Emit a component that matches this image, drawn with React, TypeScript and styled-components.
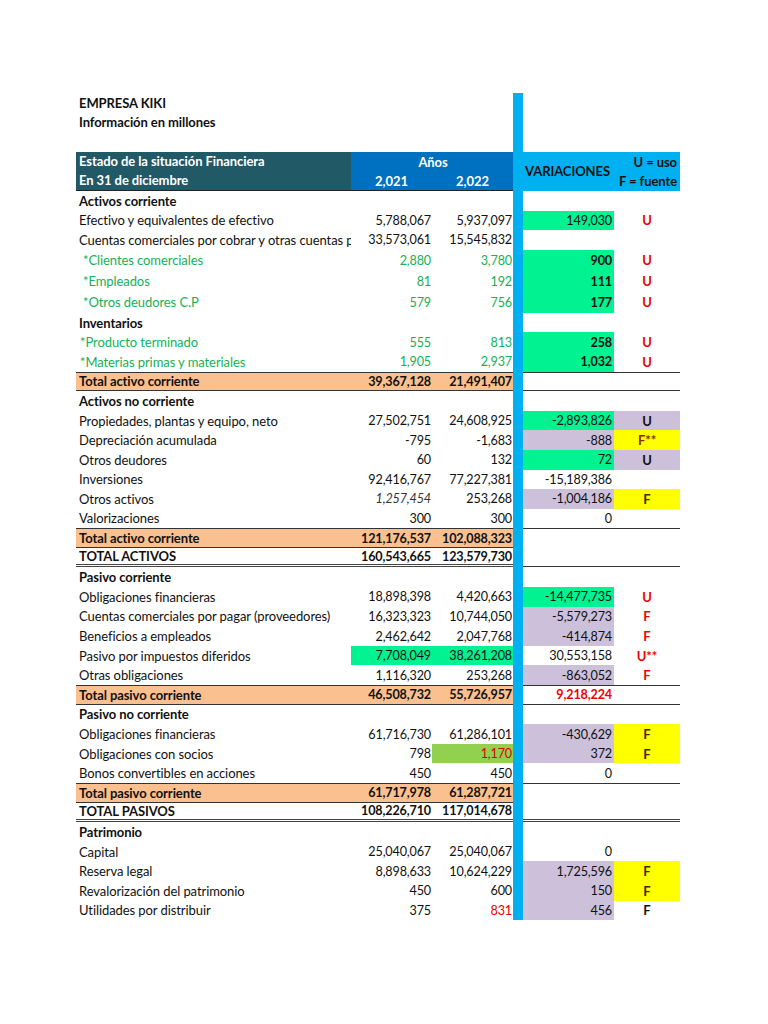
import React from "react";
import styled, { createGlobalStyle, css } from "styled-components";

const GlobalStyle = createGlobalStyle`
  html, body { margin: 0; padding: 0; background: #ffffff; }
  body { font-family: Lato, "Liberation Sans", sans-serif; color: #111; }
`;

const COLS = "275px 81px 81px 10px 91px 66px";
const RH = 19.6;

const C = {
  teal: "#215967",
  blue: "#0070C0",
  sky: "#00B0F0",
  mint: "#00F291",
  lav: "#CCC0DA",
  yellow: "#FFFF00",
  orange: "#FAC090",
  lime: "#92D050",
  green: "#16B055",
  red: "#F00000",
  darkF: "#3C2A00",
};

type Line = "line" | "double" | undefined;

const lines = css<{ $top?: Line; $bottom?: Line }>`
  box-sizing: border-box;
  border-top: ${(p) =>
    p.$top === "double" ? "3px double #444" : p.$top === "line" ? "1px solid #333" : "none"};
  border-bottom: ${(p) =>
    p.$bottom === "double" ? "3px double #444" : p.$bottom === "line" ? "1px solid #333" : "none"};
`;

const Page = styled.div`
  padding: 93px 0 80px 76px;
  font-size: 13px;
  letter-spacing: -0.08px;
`;

const Row = styled.div<{ $h: number }>`
  display: grid;
  grid-template-columns: ${COLS};
  height: ${(p) => p.$h}px;
`;

const TitleText = styled.div`
  display: flex;
  align-items: center;
  padding-left: 3px;
  font-weight: 700;
  white-space: nowrap;
  grid-column: 1 / 4;
`;

const Bar = styled.div`
  grid-column: 4;
  background: ${C.sky};
`;

const LabelCell = styled.div<{
  $top?: Line;
  $bottom?: Line;
  $fill?: string;
  $color?: string;
  $bold?: boolean;
  $indent: number;
}>`
  ${lines};
  display: flex;
  align-items: center;
  padding-left: ${(p) => p.$indent}px;
  background: ${(p) => p.$fill || "transparent"};
  color: ${(p) => p.$color || "#111"};
  font-weight: ${(p) => (p.$bold ? 700 : 400)};
  white-space: nowrap;
  overflow: hidden;
`;

const NumCell = styled.div<{
  $top?: Line;
  $bottom?: Line;
  $fill?: string;
  $color?: string;
  $bold?: boolean;
  $italic?: boolean;
}>`
  ${lines};
  display: flex;
  align-items: center;
  justify-content: flex-end;
  padding-right: 1px;
  font-size: 12.6px;
  letter-spacing: -0.15px;
  background: ${(p) => p.$fill || "transparent"};
  color: ${(p) => p.$color || "#111"};
  font-weight: ${(p) => (p.$bold ? 700 : 400)};
  font-style: ${(p) => (p.$italic ? "italic" : "normal")};
  white-space: nowrap;
`;

const VarCell = styled(NumCell)`
  padding-right: 2px;
`;

const CodeCell = styled.div<{
  $top?: Line;
  $bottom?: Line;
  $fill?: string;
  $color?: string;
}>`
  ${lines};
  display: flex;
  align-items: center;
  justify-content: center;
  background: ${(p) => p.$fill || "transparent"};
  color: ${(p) => p.$color || "#111"};
  font-weight: 700;
  white-space: nowrap;
`;

/* Header */
const Header = styled.div`
  display: grid;
  grid-template-columns: ${COLS};
  grid-template-rows: ${RH}px ${RH}px;
  color: #fff;
  font-weight: 700;
`;

const HeadTitle = styled.div`
  grid-column: 1;
  grid-row: 1 / 3;
  background: ${C.teal};
  border-bottom: 1px solid #222;
  box-sizing: border-box;
  display: flex;
  flex-direction: column;
  justify-content: space-around;
  padding-left: 3px;
`;

const HeadYears = styled.div`
  grid-column: 2 / 4;
  grid-row: 1;
  background: ${C.blue};
  display: flex;
  align-items: center;
  justify-content: center;
  padding-left: 2px;
`;

const HeadYear = styled.div<{ $col: number }>`
  grid-column: ${(p) => p.$col};
  grid-row: 2;
  background: ${C.blue};
  border-bottom: 1px solid #222;
  box-sizing: border-box;
  display: flex;
  align-items: center;
  justify-content: center;
`;

const HeadBar = styled.div`
  grid-column: 4;
  grid-row: 1 / 3;
  background: ${C.sky};
`;

const HeadVar = styled.div`
  grid-column: 5 / 7;
  grid-row: 1 / 3;
  background: ${C.sky};
  display: grid;
  grid-template-columns: 91px 66px;
  color: #111;
`;

const HeadVarLabel = styled.div`
  display: flex;
  align-items: center;
  justify-content: center;
  padding-right: 2px;
`;

const HeadLegend = styled.div`
  display: flex;
  flex-direction: column;
  justify-content: space-around;
  align-items: flex-end;
  padding-right: 3px;
  font-weight: 700;
  color: #111;
`;

type D = {
  label: string;
  kind?: "section" | "green" | "green2" | "total" | "grand";
  a?: string;
  b?: string;
  v?: string;
  c?: string;
  aFill?: string;
  bFill?: string;
  vFill?: string;
  cFill?: string;
  aColor?: string;
  bColor?: string;
  vColor?: string;
  cColor?: string;
  aItalic?: boolean;
  vBold?: boolean;
  top?: Line;
  bottomL?: Line;
  bottomR?: Line;
  h?: number;
};

const rows: D[] = [
  { label: "Activos corriente", kind: "section" },
  { label: "Efectivo y equivalentes de efectivo", a: "5,788,067", b: "5,937,097", v: "149,030", vFill: C.mint, c: "U", cColor: C.red },
  { label: "Cuentas comerciales por cobrar y otras cuentas por cobrar", a: "33,573,061", b: "15,545,832" },
  { label: "*Clientes comerciales", kind: "green", a: "2,880", b: "3,780", v: "900", vFill: C.mint, vBold: true, c: "U", cColor: C.red, h: 21 },
  { label: "*Empleados", kind: "green", a: "81", b: "192", v: "111", vFill: C.mint, vBold: true, c: "U", cColor: C.red, h: 21 },
  { label: "*Otros deudores C.P", kind: "green", a: "579", b: "756", v: "177", vFill: C.mint, vBold: true, c: "U", cColor: C.red, h: 21 },
  { label: "Inventarios", kind: "section" },
  { label: "*Producto terminado", kind: "green2", a: "555", b: "813", v: "258", vFill: C.mint, vBold: true, c: "U", cColor: C.red },
  { label: "*Materias primas y materiales", kind: "green2", a: "1,905", b: "2,937", v: "1,032", vFill: C.mint, vBold: true, c: "U", cColor: C.red },
  { label: "Total activo corriente", kind: "total", a: "39,367,128", b: "21,491,407", top: "line", bottomL: "line", bottomR: "line" },
  { label: "Activos no corriente", kind: "section" },
  { label: "Propiedades, plantas y equipo, neto", a: "27,502,751", b: "24,608,925", v: "-2,893,826", vFill: C.mint, c: "U", cFill: C.lav },
  { label: "Depreciación acumulada", a: "-795", b: "-1,683", v: "-888", vFill: C.lav, c: "F**", cFill: C.yellow, cColor: "#8A2A00" },
  { label: "Otros deudores", a: "60", b: "132", v: "72", vFill: C.mint, c: "U", cFill: C.lav },
  { label: "Inversiones", a: "92,416,767", b: "77,227,381", v: "-15,189,386" },
  { label: "Otros activos", a: "1,257,454", aItalic: true, aColor: "#333", b: "253,268", v: "-1,004,186", vFill: C.lav, c: "F", cFill: C.yellow, cColor: C.darkF },
  { label: "Valorizaciones", a: "300", b: "300", v: "0" },
  { label: "Total activo corriente", kind: "total", a: "121,176,537", b: "102,088,323", top: "line", bottomL: "line" },
  { label: "TOTAL ACTIVOS", kind: "grand", a: "160,543,665", b: "123,579,730", bottomL: "double", bottomR: "line" },
  { label: "Pasivo corriente", kind: "section" },
  { label: "Obligaciones financieras", a: "18,898,398", b: "4,420,663", v: "-14,477,735", vFill: C.mint, c: "U", cColor: C.red },
  { label: "Cuentas comerciales por pagar (proveedores)", a: "16,323,323", b: "10,744,050", v: "-5,579,273", vFill: C.lav, c: "F", cColor: C.red },
  { label: "Beneficios a empleados", a: "2,462,642", b: "2,047,768", v: "-414,874", vFill: C.lav, c: "F", cColor: C.red },
  { label: "Pasivo por impuestos diferidos", a: "7,708,049", b: "38,261,208", aFill: C.mint, bFill: C.mint, v: "30,553,158", c: "U**", cColor: C.red },
  { label: "Otras obligaciones", a: "1,116,320", b: "253,268", v: "-863,052", vFill: C.lav, c: "F", cColor: C.red },
  { label: "Total pasivo corriente", kind: "total", a: "46,508,732", b: "55,726,957", v: "9,218,224", vColor: C.red, vBold: true, top: "line", bottomL: "line", bottomR: "line" },
  { label: "Pasivo no corriente", kind: "section" },
  { label: "Obligaciones financieras", a: "61,716,730", b: "61,286,101", v: "-430,629", vFill: C.lav, c: "F", cFill: C.yellow, cColor: C.darkF },
  { label: "Obligaciones con socios", a: "798", b: "1,170", bFill: C.lime, bColor: "#E00000", v: "372", vFill: C.lav, c: "F", cFill: C.yellow, cColor: C.darkF },
  { label: "Bonos convertibles en acciones", a: "450", b: "450", v: "0" },
  { label: "Total pasivo corriente", kind: "total", a: "61,717,978", b: "61,287,721", top: "line", bottomL: "line" },
  { label: "TOTAL PASIVOS", kind: "grand", a: "108,226,710", b: "117,014,678", bottomL: "double", bottomR: "double" },
  { label: "Patrimonio", kind: "section" },
  { label: "Capital", a: "25,040,067", b: "25,040,067", v: "0" },
  { label: "Reserva legal", a: "8,898,633", b: "10,624,229", v: "1,725,596", vFill: C.lav, c: "F", cFill: C.yellow, cColor: C.darkF },
  { label: "Revalorización del patrimonio", a: "450", b: "600", v: "150", vFill: C.lav, c: "F", cFill: C.yellow, cColor: C.darkF },
  { label: "Utilidades por distribuir", a: "375", b: "831", bColor: C.red, v: "456", vFill: C.lav, c: "F" },
];

function DataRow({ d }: { d: D }) {
  const bold = d.kind === "section" || d.kind === "total" || d.kind === "grand";
  const isTotal = d.kind === "total";
  const isGreen = d.kind === "green" || d.kind === "green2";
  const fill = isTotal ? C.orange : undefined;
  const indent = d.kind === "green" ? 7 : d.kind === "green2" ? 4 : 3;
  const textColor = isGreen ? C.green : undefined;
  const numBold = isTotal || d.kind === "grand";
  return (
    <Row $h={d.h ?? RH}>
      <LabelCell $top={d.top} $bottom={d.bottomL} $fill={fill} $color={textColor} $bold={bold} $indent={indent}>
        {d.label}
      </LabelCell>
      <NumCell
        $top={d.top}
        $bottom={d.bottomL}
        $fill={d.aFill ?? fill}
        $color={d.aColor ?? textColor}
        $bold={numBold}
        $italic={d.aItalic}
      >
        {d.a}
      </NumCell>
      <NumCell $top={d.top} $bottom={d.bottomL} $fill={d.bFill ?? fill} $color={d.bColor ?? textColor} $bold={numBold}>
        {d.b}
      </NumCell>
      <Bar />
      <VarCell $top={d.top} $bottom={d.bottomR} $fill={d.vFill} $color={d.vColor} $bold={d.vBold}>
        {d.v}
      </VarCell>
      <CodeCell $top={d.top} $bottom={d.bottomR} $fill={d.cFill} $color={d.cColor}>
        {d.c}
      </CodeCell>
    </Row>
  );
}

export default function App() {
  return (
    <>
      <GlobalStyle />
      <Page>
        <Row $h={RH}>
          <TitleText>EMPRESA KIKI</TitleText>
          <Bar />
        </Row>
        <Row $h={RH}>
          <TitleText>Información en millones</TitleText>
          <Bar />
        </Row>
        <Row $h={RH}>
          <Bar />
        </Row>
        <Header>
          <HeadTitle>
            <span>Estado de la situación Financiera</span>
            <span>En 31 de diciembre</span>
          </HeadTitle>
          <HeadYears>Años</HeadYears>
          <HeadYear $col={2}>2,021</HeadYear>
          <HeadYear $col={3}>2,022</HeadYear>
          <HeadBar />
          <HeadVar>
            <HeadVarLabel>VARIACIONES</HeadVarLabel>
            <HeadLegend>
              <span>U = uso</span>
              <span>F = fuente</span>
            </HeadLegend>
          </HeadVar>
        </Header>
        {rows.map((d, i) => (
          <DataRow key={i} d={d} />
        ))}
      </Page>
    </>
  );
}
